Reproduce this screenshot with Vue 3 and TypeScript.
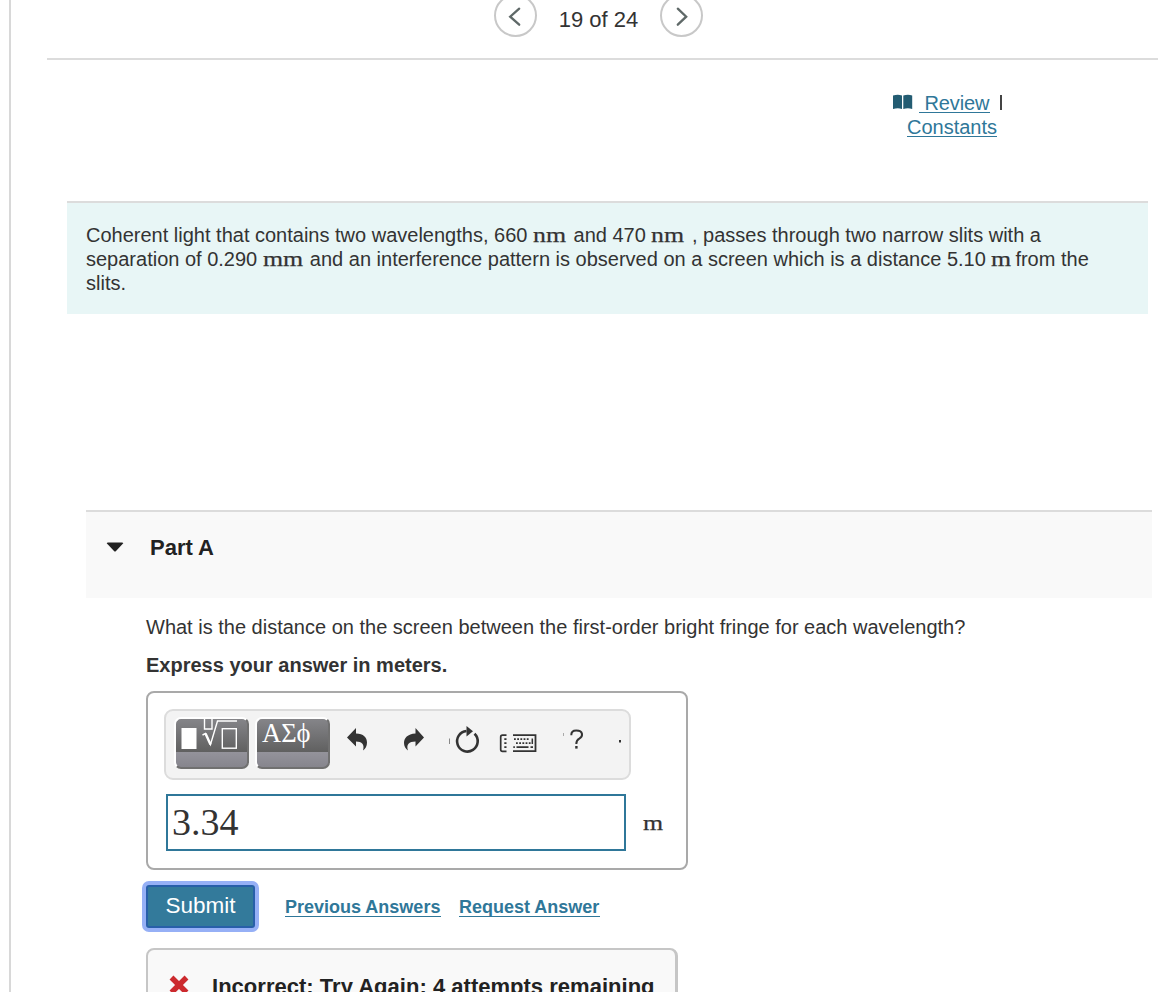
<script setup lang="ts">
const position = 19
const total = 24
const answer = '3.34'
const attempts = 4
</script>

<template>
  <div class="page">
    <nav class="pager">
      <button class="round" aria-label="Previous">
        <svg width="43" height="43" viewBox="0 0 43 43"><path d="M25.2 14.700 16.200 22.700 25.200 30.700" /></svg>
      </button>
      <span class="count">{{ position }} of {{ total }}</span>
      <button class="round" aria-label="Next">
        <svg width="43" height="43" viewBox="0 0 43 43"><path d="M17.8 14.700 26.200 22.700 17.800 30.700" /></svg>
      </button>
    </nav>

    <div class="resources">
      <div class="res-line">
        <svg class="book" width="20" height="16" viewBox="0 0 20 16">
          <path d="M0 1.5Q5 0 9 1.5V15Q5 13.5 0 15Z M10.3 1.5Q15 0 19.2 1.5V15Q15 13.5 10.3 15Z" />
        </svg>
        <a class="review">&nbsp;Review</a><span class="bar"></span>
      </div>
      <a class="constants">Constants</a>
    </div>

    <section class="intro">
      <div class="line"><span>Coherent light that contains two wavelengths, 660 </span><i class="u nm">nm</i><span> and 470 </span><i class="u nm">nm</i><span> , passes through two narrow slits with a</span></div>
      <div class="line"><span>separation of 0.290 </span><i class="u mm">mm</i><span> and an interference pattern is observed on a screen which is a distance 5.10 </span><i class="u m">m</i><span>from the</span></div>
      <div class="line"><span>slits.</span></div>
    </section>

    <header class="part">
      <svg width="18" height="11" viewBox="0 0 18 11"><path d="M.7 1.2Q1 .6 2 .6H16Q17 .6 17.3 1.2L10 9Q9 10 8 9Z" /></svg>
      <h2>Part A</h2>
    </header>

    <main class="body">
      <p class="question">What is the distance on the screen between the first-order bright fringe for each wavelength?</p>
      <p class="hint">Express your answer in meters.</p>

      <div class="answer-box">
        <div class="toolbar">
          <button class="key" aria-label="Templates">
            <svg width="75" height="52" viewBox="0 0 75 52">
              <rect x="7.5" y="11" width="15" height="21" fill="#fff" />
              <path d="M30.500 2V12H38V2" fill="none" stroke="#fff" stroke-width="1.4" />
              <path d="M28.500 18 31.500 16.500 36.500 27.500 43.500 4H63" fill="none" stroke="#fff" stroke-width="1.4" />
              <path d="M31.500 16.500 36.500 27.500" stroke="#fff" stroke-width="2.4" />
              <rect x="48.300" y="11.700" width="14" height="19.500" fill="none" stroke="#fff" stroke-width="1.4" />
            </svg>
          </button>
          <button class="key greek"><span>ΑΣϕ</span></button>
          <svg class="tools" width="300" height="52" viewBox="330 717 300 52">
            <path d="M347 737.500 356 728V733.500C363.500 733.500 367 737.500 367 742.500C367 746 365.500 749 363 750.500C364.800 744.500 362 741.500 356 741.500V746.500Z" fill="#333" />
            <path d="M424 737.500 415.500 728V733.500C407.500 734 404 738 404 743C404 746 405.500 748.500 408 750.500C406 744.500 409 741.500 415.500 741.500V746.500Z" fill="#333" />
            <path d="M449.500 738.500V744" stroke="#888" stroke-width="1" />
            <path d="M474.500 733.800A10.300 10.300 0 1 1 466.500 731" fill="none" stroke="#333" stroke-width="2.600" />
            <path d="M466.500 726 473 731.300 466.500 736.500Z" fill="#333" />
            <path d="M506.500 735.200H502.500Q500.700 735.200 500.700 737V749.500Q500.700 751.300 502.500 751.300H506.500" fill="none" stroke="#333" stroke-width="1.700" />
            <path d="M513 735.200H535.500V751.200H513" fill="none" stroke="#333" stroke-width="1.800" />
            <path d="M504.300 739.200H506.500M504.300 743.200H506.500M504.300 747.200H506.500M513.300 747.200H514.900M516.500 747.200H528.500M530.500 747.200H533" stroke="#333" stroke-width="1.700" />
            <path d="M514 739.200H530M516 743.200H532" stroke="#333" stroke-width="1.700" stroke-dasharray="1.800 1.400" />
            <path d="M532.300 738.500V744" stroke="#333" stroke-width="1.500" />
            <path d="M563.500 733V736" stroke="#aaa" stroke-width="1" />
            <path d="M571.300 735.300Q571 730.500 576.300 730.500C583.500 730.500 583.200 736.500 579.300 738.600C576.700 740 576.300 741 576.300 744" fill="none" stroke="#333" stroke-width="2" />
            <rect x="575.200" y="746" width="2.400" height="2.600" fill="#333" />
            <rect x="619" y="740" width="2" height="2.500" fill="#333" />
          </svg>
        </div>
        <div class="entry">
          <div class="field"><span>{{ answer }}</span></div>
          <i class="u m">m</i>
        </div>
      </div>

      <div class="actions">
        <button class="submit"><span>Submit</span></button>
        <a class="prev">Previous Answers</a>
        <a class="req">Request Answer</a>
      </div>

      <div class="feedback">
        <svg width="22" height="22" viewBox="0 0 22 22"><path d="M3.500 3.500 18.500 18.500M18.500 3.500 3.500 18.500" /></svg>
        <strong>Incorrect; Try Again; {{ attempts }} attempts remaining</strong>
      </div>
    </main>
  </div>
</template>

<style>
body { background: #fff; overflow: hidden; }
</style>

<style scoped>
* { box-sizing: border-box; }
.page {
  height: 992px;
  margin-left: 9px;
  border-left: 2px solid #d8d8d8;
  overflow: hidden;
  font: 20px/24px "Liberation Sans", Arial, sans-serif;
  color: #333;
}
button { padding: 0; border: 0; background: none; font: inherit; color: inherit; }
svg { display: block; flex: none; }
a { color: #2f7799; }
p, h2 { margin: 0; white-space: nowrap; }
.pager {
  display: flex;
  height: 60px;
  margin-left: 36px;
  padding-left: 447px;
  border-bottom: 2px solid #dcdcdc;
}
.round { width: 43px; height: 43px; margin-top: -6px; border: 2px solid #c8c8c8; border-radius: 50%; }
.round svg { margin: -2px; }
.round path { fill: none; stroke: #5f6968; stroke-width: 2.3; stroke-linecap: round; }
.count { width: 123px; padding-top: 7px; text-align: center; font-size: 22px; line-height: 26px; white-space: nowrap; }
.resources { margin: 31px 0 0 882px; }
.res-line { display: flex; height: 24px; }
.book { margin: 3px 6px 0 0; fill: #235c72; }
.review, .constants {
  white-space: nowrap;
  height: 22px;
  border-bottom: 1px solid #2f7799;
}
.review { width: 71px; letter-spacing: -0.1px; }
.bar { width: 2px; height: 15px; margin: 4px 0 0 10px; background: #444; }
.constants { display: block; width: 90px; margin-left: 14px; }
.intro {
  height: 113px;
  margin: 64px 10px 0 56px;
  padding: 20px 0 0 19px;
  background: #e8f6f6;
  border-top: 2px solid #dcdcdc;
}
.line { height: 24px; white-space: pre; }
.u {
  display: inline-block;
  height: 20px;
  font: 21.500px/20px "Liberation Serif", serif;
  -webkit-text-stroke: 0.25px #333;
  transform: scaleX(1.2);
  transform-origin: left;
}
.nm { width: 35px; }
.mm { width: 41.500px; }
.m { width: 24px; }
.part {
  display: flex;
  height: 88px;
  margin: 196px 6px 0 75px;
  padding: 23px 0 0 20px;
  background: #f9f9f9;
  border-top: 2px solid #dcdcdc;
}
.part svg { margin-top: 7px; fill: #222; }
.part h2 { margin-left: 26px; font-size: 22px; line-height: 25px; color: #222; }
.body { margin-left: 135px; }
.question { padding-top: 17px; }
.hint { margin-top: 14px; font-weight: bold; }
.answer-box {
  width: 542px;
  height: 179px;
  margin-top: 14px;
  padding: 16px 0 0 16px;
  border: 2px solid #a9a9a9;
  border-radius: 8px;
}
.toolbar {
  display: flex;
  width: 467px;
  height: 71px;
  padding: 6px 0 0 8px;
  background: #f3f3f3;
  border: 2px solid #dcdcdc;
  border-radius: 9px;
}
.key {
  width: 75px;
  height: 52px;
  margin-right: 6px;
  border: 2px solid;
  border-color: #fff #707070 #707070 #fff;
  border-radius: 7px;
  background: linear-gradient(#858589 0, #606060 33px, #94939b 33px, #86858d 100%);
  overflow: hidden;
  flex: none;
}
.key svg { margin: -2px; }
.greek { text-align: left; }
.greek span {
  display: block;
  margin: 1px 0 0 5px;
  height: 45px;
  color: #fff;
  font: 26.500px/25px "Liberation Serif", serif;
}
.tools { margin-left: -6px; }
.entry { display: flex; margin-top: 14px; padding-left: 2px; }
.field {
  width: 460px;
  height: 57px;
  padding: 5px 4px;
  border: 2px solid #2f7799;
  font: 38px/42px "Liberation Serif", serif;
}
.entry .u { margin: 19px 0 0 17px; }
.actions { display: flex; height: 51px; margin: 11px 0 0 -4px; }
.submit {
  width: 117px;
  height: 51px;
  border: 4px solid #96b0f6;
  border-radius: 7px;
  background: #337a9b;
  box-shadow: inset 0 0 0 2px #285fa9;
  color: #fff;
  font-size: 22.500px;
  line-height: 41px;
}
.submit span { display: block; height: 43px; }
.prev, .req { height: 20px; margin-top: 16px; font-size: 18px; font-weight: bold; line-height: 20px; border-bottom: 1px solid #2f7799; white-space: nowrap; }
.prev { width: 156px; margin-left: 26px; }
.req { width: 141px; margin-left: 18px; }
.feedback {
  display: flex;
  width: 532px;
  height: 100px;
  margin-top: 16px;
  padding: 24px 0 0 20px;
  border: 2px solid #c6c6c6;
  border-right-width: 3px;
  border-radius: 8px;
  background: #f9f9f9;
}
.feedback path { fill: none; stroke: #cc2a2e; stroke-width: 5.500; }
.feedback strong { margin-left: 22px; font-size: 22px; line-height: 25px; color: #222; white-space: nowrap; letter-spacing: 0.02px; }
</style>
